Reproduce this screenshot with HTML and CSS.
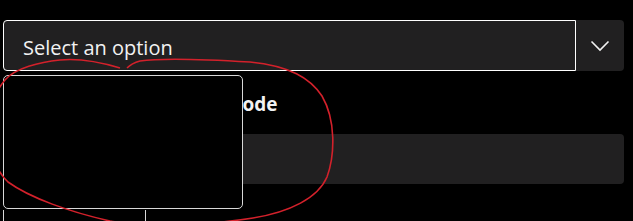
FILE: index.html
```html
<!DOCTYPE html>
<html lang="en">
<head>
    <meta charset="UTF-8">
    <meta name="viewport" content="width=device-width, initial-scale=1.0">
    <title>Select an option</title>
    <link rel="stylesheet" href="styles.css">
</head>
<body>
    <div class="form">
        <div class="select-row">
            <div class="select-box">Select an option</div>
            <div class="select-btn">
                <svg width="20" height="12" viewBox="0 0 20 12">
                    <path d="M1.5 1.5 L10 10 L18.5 1.5" fill="none" stroke="#f2f2f2" stroke-width="1.6"/>
                </svg>
            </div>
        </div>

        <label class="field-label">Shipping address postal code</label>
        <div class="text-input"></div>
    </div>

    <!-- flyout open over the form -->
    <div class="flyout"></div>
    <div class="flyout-next"></div>

    <!-- red marker drawn on the screenshot -->
    <svg class="marker" width="633" height="221" viewBox="0 0 633 221">
        <path d="M120,68 C100,62 80,58 60,60 C40,62 15,68 5,80 C-20,110 -15,160 8,182 C30,198 70,212 110,221 C150,228 200,226 253,218 C290,212 318,198 327,177 C335,155 336,120 322,96 C310,78 290,66 250,62 C200,59 160,58 140,61 C133,63 129,66 127,68"
              fill="none" stroke="#d3212b" stroke-width="1.6"/>
    </svg>
</body>
</html>
```

FILE: styles.css
```css
html {
    height: 100%;
    background: #000;
    overflow: hidden;
}
body {
    margin: 0;
    height: 100%;
    box-sizing: border-box;
    padding: 20px 0 0 3px;
    color: #f2f2f2;
    font-family: "Open Sans", "Noto Sans", sans-serif;
    position: relative;
}
.form {
    width: 621px;
}
.select-row {
    display: flex;
    height: 51px;
}
.select-box {
    flex: 1;
    display: flex;
    align-items: center;
    padding-left: 19px;
    padding-top: 3px;
    border: 1px solid #fff;
    border-radius: 4px 0 0 4px;
    background: #212021;
    font-size: 20px;
}
.select-btn {
    flex: 0 0 48px;
    display: flex;
    align-items: center;
    justify-content: center;
    background: #212021;
    border-radius: 0 4px 4px 0;
}
.field-label {
    display: block;
    margin-top: 20px;
    font-size: 19px;
    font-weight: bold;
    line-height: 26px;
}
.text-input {
    margin-top: 17px;
    height: 50px;
    background: #212021;
    border-radius: 4px;
}
.flyout {
    position: absolute;
    left: 3px;
    top: 75px;
    width: 238px;
    height: 132px;
    border: 1px solid #d8d8d8;
    border-radius: 5px;
    background: #000;
}
.flyout-next {
    position: absolute;
    left: 3px;
    top: 210px;
    width: 141px;
    height: 20px;
    border-left: 1px solid #d8d8d8;
    border-right: 1px solid #d8d8d8;
}
.marker {
    position: absolute;
    left: 0;
    top: 0;
}
```
